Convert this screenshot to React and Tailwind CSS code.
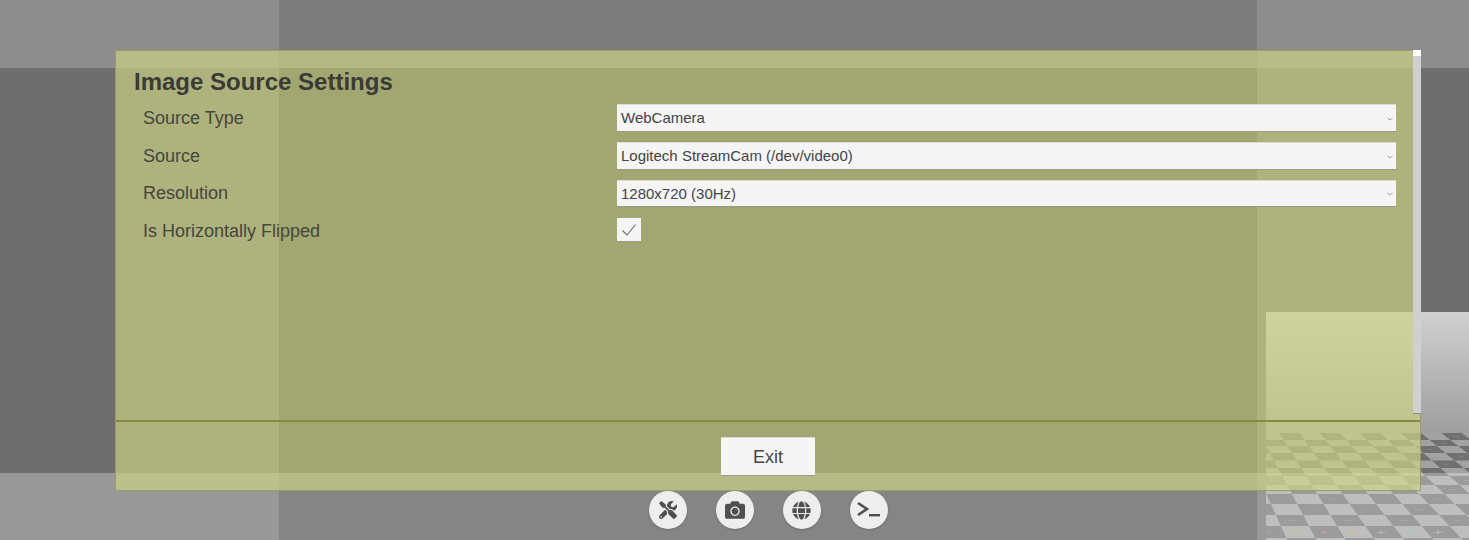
import { FaTools, FaCamera, FaGlobe } from "react-icons/fa";

const rowEdges = [433, 440, 446, 453, 460.5, 468, 476, 485, 494, 504, 515, 526, 538, 551];

// half a checker period at screen row y, edges run towards one vanishing point
const halfCell = (y) => 0.085 * (y - 195);
const edgeX = (y, t) => 1132 + halfCell(y) * t - 1266;

const floorCells = [];
rowEdges.slice(0, -1).forEach((top, r) => {
  const bottom = rowEdges[r + 1];
  const mid = (top + bottom) / 2;
  for (let i = -4; i < 24; i += 2) {
    const t = 1.29 + i + (r % 2);
    floorCells.push({
      key: `${r}-${i}`,
      cx: edgeX(mid, t + 0.5),
      cy: mid - 312,
      points: [
        [edgeX(top, t), top - 312],
        [edgeX(top, t + 1), top - 312],
        [edgeX(bottom, t + 1), bottom - 312],
        [edgeX(bottom, t), bottom - 312],
      ].join(" "),
    });
  }
});

const markColors = ["#e0b070", "#e0a0a0", "#e0b870", "#c0d0a0", "#90d0b0", "#a0d8d8"];

function FloorScene() {
  return (
    <svg className="absolute left-[1266px] top-[312px]" width="203" height="228" viewBox="0 0 203 228">
      <defs>
        <linearGradient id="sky" x1="0" y1="0" x2="0" y2="1">
          <stop offset="0" stopColor="#d0d0d0" />
          <stop offset="1" stopColor="#9e9e9e" />
        </linearGradient>
      </defs>
      <rect width="203" height="121" fill="url(#sky)" />
      <rect y="121" width="203" height="107" fill="#a2a2a2" />
      <g className="blur-[0.6px]">
        {floorCells.map((c) => (
          <g key={c.key}>
            <polygon points={c.points} fill="#707070" />
            <rect x={c.cx - 3} y={c.cy - 0.5} width="6" height="1" fill="#ffffff" fillOpacity="0.12" />
          </g>
        ))}
      </g>
      <rect y="161" width="203" height="67" fill="#ffffff" fillOpacity="0.3" />
      {markColors.map((color, i) => (
        <g key={color + i} fill={color} fillOpacity="0.6">
          <rect x={26 + i * 28.5} y="220" width="7" height="1" />
          <rect x={29 + i * 28.5} y="218" width="1" height="5" />
        </g>
      ))}
    </svg>
  );
}

function Dropdown({ value }) {
  return (
    <div className="flex h-full w-[779px] items-center justify-between border-b border-b-[#9a9a8c] border-t border-t-[#dcdcd4] bg-[#f5f5f5] pl-[4px] pr-[3px] pt-[1px] text-[15px] text-[#444444]">
      <span>{value}</span>
      <svg width="6" height="4" viewBox="0 0 6 4">
        <path d="M0.5 1 L3 3 L5.5 1" fill="none" stroke="#a0a0a0" strokeWidth="1" />
      </svg>
    </div>
  );
}

function Row({ label, height = "h-[28px]", children }) {
  return (
    <div className={`flex items-center ${height}`}>
      <div className="w-[483px] pl-[9px] text-[18px] text-[#45463c]">{label}</div>
      {children}
    </div>
  );
}

function RoundButton({ children }) {
  return (
    <button className="flex h-[38px] w-[38px] items-center justify-center rounded-full bg-[#eeeeee] text-[#505050] shadow-[0_1px_2px_rgba(0,0,0,0.18)]">
      {children}
    </button>
  );
}

export default function App() {
  return (
    <div className="relative h-[540px] w-[1469px] overflow-hidden font-['Liberation_Sans',Arial,sans-serif]">
      {/* scene behind the panel */}
      <div className="grid h-full grid-cols-[279px_978px_1fr] grid-rows-[68px_405px_1fr]">
        <div className="bg-[#8d8d8d]" />
        <div className="bg-[#7c7c7c]" />
        <div className="bg-[#8d8d8d]" />
        <div className="bg-[#6e6e6e]" />
        <div className="bg-[#4a4a4a]" />
        <div className="bg-[#6e6e6e]" />
        <div className="bg-[#999999]" />
        <div className="bg-[#858585]" />
        <div className="bg-[#999999]" />
      </div>
      <FloorScene />

      {/* settings panel */}
      <div className="absolute left-[115px] top-[50px] flex h-[441px] w-[1306px] flex-col border border-[#9a9c6c] bg-[rgba(206,212,133,0.67)]">
        <div className="relative h-[369px] pl-[18px]">
          <h1 className="pt-[16px] text-[24px] font-bold leading-[30px] text-[#3a3a36]">Image Source Settings</h1>
          <div className="mt-[7px] flex flex-col gap-[10px]">
            <Row label="Source Type"><Dropdown value="WebCamera" /></Row>
            <Row label="Source"><Dropdown value="Logitech StreamCam (/dev/video0)" /></Row>
            <Row label="Resolution" height="h-[27px]"><Dropdown value="1280x720 (30Hz)" /></Row>
            <Row label="Is Horizontally Flipped">
              <div className="mb-[2px] flex h-[24px] w-[24px] items-center justify-center border-b border-b-[#9a9a8c] bg-[#f5f5f5]">
                <svg width="16" height="14" viewBox="0 0 16 14">
                  <path d="M1.5 7.5 L6 12 L14.5 1.5" fill="none" stroke="#6a6a6a" strokeWidth="1.1" />
                </svg>
              </div>
            </Row>
          </div>
          <div className="absolute right-[-1px] top-[-1px] flex h-[364px] w-[8px] flex-col border-b border-b-[#8a8a80] bg-[#d0d0d0]">
            <div className="h-[6px] bg-white" />
          </div>
        </div>
        <div className="flex flex-1 justify-center border-t-2 border-t-[#86893f] pt-[15px]">
          <button className="h-[39px] w-[94px] border-b border-b-[#9a9a8c] border-t border-t-[#dcdcd4] bg-[#f5f5f5] pt-[1px] text-[18px] text-[#444444]">Exit</button>
        </div>
      </div>

      {/* toolbar under the panel */}
      <div className="absolute left-[648.5px] top-[491px] flex gap-[29px]">
        <RoundButton><FaTools size={18} /></RoundButton>
        <RoundButton><FaCamera size={20} /></RoundButton>
        <RoundButton><FaGlobe size={19} /></RoundButton>
        <RoundButton>
          <svg width="26" height="20" viewBox="0 0 26 20">
            <path d="M2 3 L11 9 L2 15" fill="none" stroke="#505050" strokeWidth="2.6" />
            <rect x="13" y="14" width="11" height="2.4" fill="#505050" />
          </svg>
        </RoundButton>
      </div>
    </div>
  );
}
